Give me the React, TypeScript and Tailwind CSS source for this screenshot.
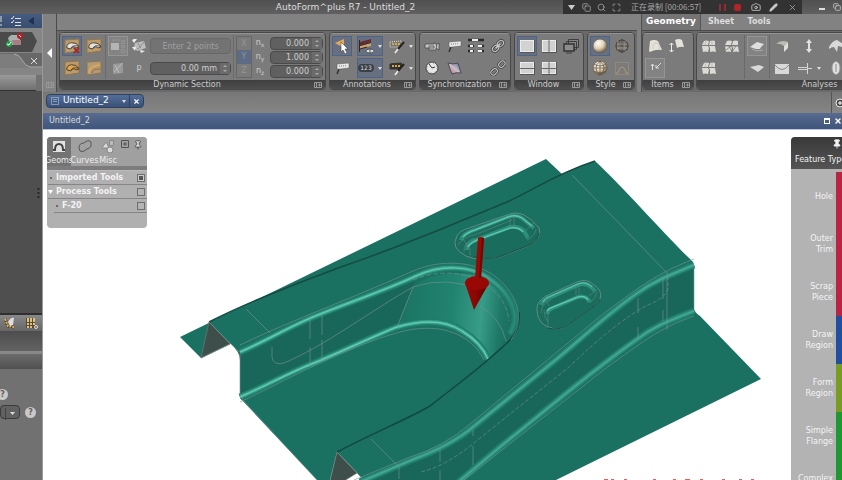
import { ReactNode } from 'react';
import { clsx } from 'clsx';
import { Camera, Copy, Maximize, Pencil, Pin, Search, X } from 'lucide-react';

interface ChildrenProps {
  children?: ReactNode;
}

interface IconButtonProps extends ChildrenProps {
  label: string;
  active?: boolean;
  outlined?: boolean;
  wide?: boolean;
}

function IconButton({ children, label, active, outlined, wide }: IconButtonProps) {
  return (
    <button
      type="button"
      aria-label={label}
      className={clsx(
        'flex h-5 shrink-0 items-center justify-center gap-1 border',
        wide ? 'w-[26px]' : 'w-5',
        active && 'border-[#4d6488] bg-[#667080]',
        outlined && 'border-[#959595] bg-[#838383]',
        !active && !outlined && 'border-transparent'
      )}
    >
      {children}
    </button>
  );
}

function Svg({ children, w = 16 }: ChildrenProps & { w?: number }) {
  return (
    <svg width={w} height="16" viewBox={`0 0 ${w} 16`} fill="none" className="shrink-0">
      {children}
    </svg>
  );
}

function Caret() {
  return (
    <svg width="4" height="3" viewBox="0 0 4 3" className="shrink-0">
      <path d="M0 0h4L2 3z" fill="#e0e0e0" />
    </svg>
  );
}

function ExpandIcon() {
  return (
    <svg width="8" height="6" viewBox="0 0 8 6" fill="none" stroke="#999">
      <path d="M.5.5h7v5h-7zM2.5 1v4M4 3h3M5.500 1.500v3" />
    </svg>
  );
}

interface GroupProps extends ChildrenProps {
  title: string;
  className?: string;
  expand?: boolean;
}

function Group({ title, className, children, expand = true }: GroupProps) {
  return (
    <section className={clsx('flex h-[58px] flex-col overflow-hidden rounded-sm border border-[#484848] bg-[#7b7b7b]', className)}>
      <div className="flex h-[47px] shrink-0 items-center border-t border-[#929292] px-[2px]">{children}</div>
      <div className="flex h-[10px] items-center bg-gradient-to-b from-[#3f3f3f] to-[#505050] pr-[3px] leading-[10px] text-[#ccc]">
        <h2 className="flex-1 text-center">{title}</h2>
        {expand && (
          <button type="button" aria-label={`${title} options`}>
            <ExpandIcon />
          </button>
        )}
      </div>
    </section>
  );
}

function Divider() {
  return <span className="mx-[2px] h-11 w-px shrink-0 bg-[#6a6a6a]" />;
}

/* section plane with a surface cut through it */
function PlaneIcon({ cross, gold, flat }: { cross?: boolean; gold?: boolean; flat?: boolean }) {
  return (
    <Svg>
      <path d="M1 2l14-1v12L1 15z" fill={flat ? '#b39b75' : '#bd9c69'} stroke="#8f7650" />
      {flat ? (
        <>
          <path d="M3 13c0-5 3-7 11-8" stroke="#e3a957" strokeWidth="1.500" />
          <path d="M6 13c0-3 3-4 8-4" stroke="#8d6c41" />
        </>
      ) : (
        <>
          <path d="M3 10c-1-3 2-6 6-5 3 0 5 2 6 4l-3 1c-2-2-4-1-5 1z" fill={gold ? '#dfa64f' : '#e2e2e2'} stroke="#4c4032" />
          <path d="M7 10c2-3 4-2 8-2" stroke="#4c4032" />
        </>
      )}
      {cross && <path d="M10 10l5 5M15 10l-5 5" stroke="#9e2b33" strokeWidth="2" />}
    </Svg>
  );
}

function LabelIcon() {
  return (
    <Svg>
      <path d="M3 4l12-1v5l-9 1-2 1-1-2z" fill="#e9e9e9" stroke="#555" strokeWidth=".5" />
      <path d="M5 9l-2 5" stroke="#333" strokeWidth="1.500" />
      <path d="M5 6.200l8-.6" stroke="#777" strokeDasharray="1 1" />
    </Svg>
  );
}

function WandIcon({ dark }: { dark?: boolean }) {
  return (
    <Svg>
      <path
        d="M1 4l11-1 2 3-4 3H1z"
        fill={dark ? '#333' : '#777'}
        stroke={dark ? '#333' : '#ddd'}
        strokeDasharray={dark ? undefined : '1 1'}
      />
      <path d="M3 6h8" stroke="#dba83c" strokeWidth="2" strokeDasharray="2 1" />
      <path d="M15 4l-6 7" stroke="#222" strokeWidth="2" />
      <path d="M9 11l-3 4" stroke="#eee" strokeWidth="1.500" />
    </Svg>
  );
}

function PaneIcon({ split }: { split: string }) {
  return (
    <Svg>
      <rect x="1.500" y="2.500" width="13" height="11" fill="#d2d2d2" stroke="#ececec" />
      <path d="M1 14.500h14.500V2" stroke="#555" />
      <path d={split} stroke="#686868" />
    </Svg>
  );
}

function ChainIcon({ open }: { open?: boolean }) {
  const near = open ? -1 : 1;
  const far = open ? 10 : 8;
  return (
    <Svg>
      <g transform="rotate(-45 8 8)">
        <rect x={near} y="5.500" width="7" height="5" rx="2.500" stroke="#444" strokeWidth="2.500" />
        <rect x={far} y="5.500" width="7" height="5" rx="2.500" stroke="#444" strokeWidth="2.500" />
        <rect x={near} y="5.500" width="7" height="5" rx="2.500" stroke="#c8c8c8" />
        <rect x={far} y="5.500" width="7" height="5" rx="2.500" stroke="#c8c8c8" />
        {!open && <path d="M5 8h6" stroke="#ccc" strokeWidth="1.500" />}
      </g>
    </Svg>
  );
}

function SphereIcon({ mesh, wire }: { mesh?: boolean; wire?: boolean }) {
  return (
    <Svg>
      <defs>
        <radialGradient id="ball" cx=".38" cy=".3" r=".7">
          <stop offset="0" stopColor="#fff" />
          <stop offset=".55" stopColor="#e0cfb3" />
          <stop offset="1" stopColor="#6d604e" />
        </radialGradient>
      </defs>
      <circle cx="8" cy="8" r={wire ? 6 : 7} fill={wire ? '#777' : 'url(#ball)'} stroke={wire ? '#39352f' : '#6d604e'} strokeWidth=".8" />
      {(mesh || wire) && (
        <path
          d="M8 1v14M1 8h14M2 4.500q6 3 12 0M2 11.500q6 3 12 0M8 1q-8 7 0 14M8 1q8 7 0 14"
          stroke={wire ? '#4d483f' : '#5b503f'}
          strokeWidth=".7"
        />
      )}
      {wire && <path d="M4 3v9M11 3v10M3 6h10M3 10h10" stroke="#b5a993" strokeWidth=".6" />}
    </Svg>
  );
}

function MeshIcon({ refined }: { refined?: boolean }) {
  return (
    <Svg>
      <path d="M3 3q2-1 5 0l-1 4-6 0zM9 3q3-1 5 0l0 4H8zM1 8h6l1 2-1 4q-3-1-5 0zM8 8h6l1 6q-3-1-6 0l0-4z" fill="#dcdad4" />
      {refined ? (
        <path d="M1 8h14M5 8l3 6M12 8l-4 6M2 12l5-4" stroke="#777" strokeWidth=".8" />
      ) : (
        <path d="M5 3l-1 4M11 3v4" stroke="#bbb" />
      )}
    </Svg>
  );
}

function SurfaceIcon() {
  return (
    <Svg>
      <path d="M3 3q4-2 8 0l4 9q-6-1-12 2l-1-1z" fill="#e5e2da" />
      <path d="M6 11q-1-6 3-6t3 6" stroke="#cbc7bd" />
    </Svg>
  );
}

interface NumberFieldProps {
  label: ReactNode;
  id: string;
  value: string;
  className?: string;
}

function NumberField({ label, id, value, className }: NumberFieldProps) {
  return (
    <div className="flex items-center gap-1 text-[#cfcfcf]">
      <label htmlFor={id} className="w-3 text-center">{label}</label>
      <span className={clsx('flex h-[13px] items-center rounded-sm border border-[#4a4a4a] bg-[#606060]', className)}>
        <input id={id} defaultValue={value} className="h-full w-0 min-w-0 flex-1 bg-transparent pr-[3px] text-right outline-none" />
        <svg width="10" height="11" viewBox="0 0 10 11" className="bg-[#6b6b6b]">
          <path d="M5 2l2 2H3zM5 9l2-2H3z" fill="#aaa" />
        </svg>
      </span>
    </div>
  );
}

function DynamicSection() {
  return (
    <Group title="Dynamic Section" className="w-[267px]">
      <div className="grid grid-cols-2 gap-x-[3px] gap-y-[2px]">
        <IconButton label="Hide section" active><PlaneIcon cross /></IconButton>
        <IconButton label="Section plane"><PlaneIcon /></IconButton>
        <IconButton label="Cut section"><PlaneIcon gold /></IconButton>
        <IconButton label="Section curves"><PlaneIcon flat /></IconButton>
      </div>
      <Divider />
      <div className="flex flex-col gap-[2px]">
        <div className="flex items-center gap-px">
          <IconButton label="Section list" outlined>
            <Svg>
              <path d="M1 5h8v7H1z" fill="#b4b4b4" />
              <path d="M11.500 2.500h3v3h-3zM11.500 7.500h3v2h-3zM11.500 11.500h3v3h-3zM3 4V2h7" stroke="#949494" />
            </Svg>
          </IconButton>
          <IconButton label="Move section">
            <Svg>
              <path d="M4 5l9-2 2 7-9 3-3-4z" fill="#bdbdbd" />
              <path d="M3 1h3L3 5 1 2zM1 9l4 0-1 4zM10 15l4-2-5-1z" fill="#ededed" />
              <path d="M7 5l2 4 4-5M6 11l4-2" stroke="#8c8c8c" />
            </Svg>
          </IconButton>
          <input
            aria-label="Enter 2 points"
            placeholder="Enter 2 points"
            className="h-4 w-[81px] rounded-sm border border-[#676767] bg-[#737373] text-center placeholder:text-[#a0a0a0]"
          />
        </div>
        <div className="flex items-center gap-px">
          <IconButton label="Pick points">
            <Svg>
              <path d="M3 4l10-1v10L3 14z" fill="#9a9a9a" />
              <path d="M4 12l4-4 4-5M5 5l4 8" stroke="#bbb" />
            </Svg>
          </IconButton>
          <div className="ml-1">
            <NumberField id="p" label="p" value="0.00 mm" className="ml-px w-[81px]" />
          </div>
        </div>
      </div>
      <Divider />
      <div className="flex w-4 shrink-0 flex-col border border-[#666] text-center text-[#969696]">
        <button type="button" className="h-[13px] leading-[13px]">X</button>
        <button type="button" className="h-[14px] bg-[#5d6c85] leading-[14px]">Y</button>
        <button type="button" className="h-[13px] leading-[13px]">Z</button>
      </div>
      <div className="flex flex-col gap-px pl-[2px]">
        <NumberField id="nx" label={<>n<sub className="text-[6px]">x</sub></>} value="0.000" className="w-[53px]" />
        <NumberField id="ny" label={<>n<sub className="text-[6px]">y</sub></>} value="1.000" className="w-[53px]" />
        <NumberField id="nz" label={<>n<sub className="text-[6px]">z</sub></>} value="0.000" className="w-[53px]" />
      </div>
    </Group>
  );
}

function Annotations() {
  return (
    <Group title="Annotations" className="w-[87px]">
      <div className="grid grid-cols-[20px_26px_26px] gap-x-[5px] gap-y-[2px]">
        <IconButton label="Pick" active>
          <Svg>
            <path d="M1 5l9-4v9z" fill="#eaa85a" />
            <path d="M7 4l7 7-3 0 2 4-2 1-2-4-2 2z" fill="#fff" stroke="#333" strokeWidth=".5" />
          </Svg>
        </IconButton>
        <IconButton label="Measure" active wide>
          <Svg>
            <path d="M2 4v3l11-3V1z" fill="#6b2930" />
            <path d="M2 8v3l11-3V5z" fill="#d3a06a" />
            <path d="M1.500 2v12M2 7.500l11-3M2 11l7-2" stroke="#322622" />
            <ellipse cx="12" cy="13" rx="4" ry="2" fill="#ddd" stroke="#333" strokeWidth=".7" />
            <path d="M12 11v4" stroke="#555" />
          </Svg>
          <Caret />
        </IconButton>
        <IconButton label="Edit marks" wide><WandIcon /><Caret /></IconButton>
        <IconButton label="Label"><LabelIcon /></IconButton>
        <IconButton label="Values" active wide>
          <span className="flex h-[8px] w-4 items-center justify-center rounded-sm bg-[#3b3f48] text-[6px] leading-none text-[#ddd]">123</span>
          <Caret />
        </IconButton>
        <IconButton label="Edit labels" wide><WandIcon dark /><Caret /></IconButton>
      </div>
    </Group>
  );
}

function Synchronization() {
  return (
    <Group title="Synchronization" className="w-[92px]">
      <div className="grid grid-cols-4 gap-x-[2px] gap-y-[2px]">
        <IconButton label="Camera">
          <Svg>
            <path d="M1 6h9V5h2v2l3-2v7l-3-2v2H5v-2H1z" fill="#c4c4c4" stroke="#4c4c4c" strokeWidth=".8" />
            <path d="M5 8h5v2H5zM12.500 6v5" stroke="#666" />
          </Svg>
        </IconButton>
        <IconButton label="Sync labels"><LabelIcon /></IconButton>
        <IconButton label="Sync sliders">
          <Svg>
            <path d="M0 2h16M0 8h6M10 8h6M0 13h6M10 13h6" stroke="#2c2c2c" strokeWidth="2.500" />
            <path d="M4 2h6M2 8h3M10 8h4M2 13h3M10 13h4" stroke="#eee" strokeWidth="2" />
          </Svg>
        </IconButton>
        <IconButton label="Link"><ChainIcon /></IconButton>
        <IconButton label="Time">
          <Svg>
            <circle cx="8" cy="8" r="6" fill="#e6e6e6" stroke="#444" />
            <path d="M8 8L5 4M8 8l3-1" stroke="#333" />
            <circle cx="8" cy="8" r="5" stroke="#888" strokeDasharray="1 3" />
          </Svg>
        </IconButton>
        <IconButton label="Result">
          <Svg>
            <defs>
              <linearGradient id="result" x1="0" x2="1" y1="1" y2="0">
                <stop offset="0" stopColor="#b06a72" />
                <stop offset=".5" stopColor="#cdbcc4" />
                <stop offset="1" stopColor="#4b6b9f" />
              </linearGradient>
            </defs>
            <path d="M2 3q5 2 10 0l3 10q-5-1-9 1-2-4-4-11z" fill="url(#result)" stroke="#4c4a58" />
          </Svg>
        </IconButton>
        <span />
        <IconButton label="Unlink"><ChainIcon open /></IconButton>
      </div>
    </Group>
  );
}

function WindowGroup() {
  return (
    <Group title="Window" className="w-[70px]">
      <div className="grid grid-cols-3 gap-x-[2px] gap-y-[2px]">
        <IconButton label="Single" active><PaneIcon split="" /></IconButton>
        <IconButton label="Two columns"><PaneIcon split="M8 2v12" /></IconButton>
        <IconButton label="Cascade">
          <Svg>
            <path d="M5.500 1.500h10v8h-10zM3.500 3.500h10v8h-10z" fill="#848484" stroke="#3c3c3c" />
            <path d="M1 6h10v7H1z" fill="#8c8c8c" stroke="#333" strokeWidth="1.500" />
            <path d="M3 15h6" stroke="#3c3c3c" />
          </Svg>
        </IconButton>
        <IconButton label="Two rows"><PaneIcon split="M1 8.500h14" /></IconButton>
        <IconButton label="Four panes"><PaneIcon split="M8 2v12M1 8.500h14" /></IconButton>
      </div>
    </Group>
  );
}

function StyleGroup() {
  return (
    <Group title="Style" className="w-12">
      <div className="grid grid-cols-2 gap-x-[2px] gap-y-[2px]">
        <IconButton label="Shaded" active><SphereIcon /></IconButton>
        <IconButton label="Wireframe"><SphereIcon wire /></IconButton>
        <IconButton label="Shaded mesh"><SphereIcon mesh /></IconButton>
        <IconButton label="Outline">
          <Svg>
            <path d="M1.500 2.500h13v12h-13z" stroke="#a7997f" strokeDasharray="1 1" />
            <path d="M2 13h2q1-6 4-6t4 6h2" stroke="#b3976b" />
          </Svg>
        </IconButton>
      </div>
    </Group>
  );
}

function Items() {
  return (
    <Group title="Items" className="w-[52px] shrink-0">
      <div className="grid grid-cols-2 gap-x-[2px] gap-y-[2px]">
        <IconButton label="Surface"><SurfaceIcon /></IconButton>
        <IconButton label="Offset">
          <Svg>
            <path d="M6 2q4-2 7 0l2 7q-4-1-7 1z" fill="#e5e2da" />
            <path d="M2.500 5v9M.5 7l2-2 2 2M.5 12l2 2 2-2" stroke="#eee" />
          </Svg>
        </IconButton>
        <IconButton label="Directions" outlined>
          <Svg>
            <path d="M5.500 10V4M4 6l1.500-2L7 6M14 3L9 8M9 5v3h3" stroke="#ddd" />
          </Svg>
        </IconButton>
      </div>
    </Group>
  );
}

function Analyses() {
  return (
    <Group title="Analyses" className="min-w-[250px] flex-1" expand={false}>
      <div className="grid grid-cols-2 gap-x-[3px] gap-y-[2px]">
        <IconButton label="Mesh"><MeshIcon /></IconButton>
        <IconButton label="Mesh quality"><MeshIcon refined /></IconButton>
        <IconButton label="Mesh check"><MeshIcon /></IconButton>
      </div>
      <Divider />
      <div className="flex flex-col gap-[2px]">
        <IconButton label="Draft" outlined>
          <Svg>
            <path d="M1 9l7-5 7 2-3 3-1 2-4 0z" fill="#dedede" />
            <path d="M3 11l5 2 6-1" stroke="#aaa" />
          </Svg>
        </IconButton>
        <IconButton label="Undercut">
          <Svg><path d="M1 7l9-2 5 2-6 5z" fill="#d9d9d9" /></Svg>
        </IconButton>
      </div>
      <Divider />
      <div className="grid grid-cols-3 gap-x-[7px] gap-y-[2px]">
        <IconButton label="Radius">
          <Svg>
            <path d="M2 6q5-5 12-2l-4 4q-4-3-8-2z" fill="#bdbbb6" />
            <path d="M14 4v6l-4 4V8z" fill="#e0ded8" />
          </Svg>
        </IconButton>
        <IconButton label="Height">
          <Svg><path d="M8 1l3 4H9v6h2l-3 4-3-4h2V5H5z" fill="#e2e2e2" /></Svg>
        </IconButton>
        <IconButton label="Curvature">
          <Svg><path d="M1 9q3-6 8-7l6 4-1 3-4-1-1 6-3-5q-3 0-5 2z" fill="#d9d9d9" /></Svg>
        </IconButton>
        <IconButton label="Area">
          <Svg>
            <path d="M1 4h14v10H1z" fill="#d9d9d9" />
            <path d="M1 5q7 9 14 0" stroke="#888" />
          </Svg>
        </IconButton>
        <IconButton label="Distance">
          <Svg>
            <path d="M1 7.500h9M1 9.500h9M10.500 3v11M11 8.500h4" stroke="#d5d5d5" />
          </Svg>
          <Caret />
        </IconButton>
        <IconButton label="Thickness">
          <Svg>
            <ellipse cx="8" cy="8" rx="4" ry="6.500" fill="#e2e2e2" stroke="#999" />
            <path d="M8 4v8" stroke="#888" />
          </Svg>
        </IconButton>
      </div>
      <svg width="4" height="10" viewBox="0 0 4 10" className="-ml-px"><path d="M0 0v10l4-5z" fill="#fff" /></svg>
    </Group>
  );
}

function TitleBar() {
  return (
    <header className="flex h-[14px] shrink-0 items-center bg-gradient-to-b from-[#505050] to-[#606060] leading-[14px]">
      <h1 className="flex-1 pl-32 text-center text-[9px] text-[#ddd]">AutoForm^plus R7 - Untitled_2</h1>
      <div className="flex h-full w-[239px] items-center gap-[6px] bg-[#323232] pl-1 font-['Noto_Sans_CJK_SC',sans-serif] text-[#aaa]">
        <svg width="9" height="5" viewBox="0 0 9 5"><path d="M1 0h7L4.500 5z" fill="#ccc" /></svg>
        <Copy size={9} />
        <Search size={9} />
        <Maximize size={9} />
        <span className="ml-1 w-[82px] whitespace-nowrap">正在录制 [00:06:57]</span>
        <svg width="7" height="7" viewBox="0 0 7 7"><path d="M0 0h2v7H0zM5 0h2v7H5z" fill="#942b30" /></svg>
        <svg width="7" height="7" viewBox="0 0 7 7" className="ml-[2px]"><rect width="7" height="7" rx="2" fill="#b3232b" /></svg>
        <Camera size={10} className="ml-1 text-[#ccc]" />
        <Pencil size={9} className="ml-[2px] fill-current text-[#ccc]" />
        <X size={9} className="ml-1" />
      </div>
      <div className="flex w-10 items-center justify-end gap-2 pr-px text-[#ddd]">
        <span className="mt-1 h-[2px] w-[6px] bg-[#ddd]" />
        <Copy size={8} />
      </div>
    </header>
  );
}

function Help() {
  return (
    <button type="button" className="size-[11px] shrink-0 rounded-full bg-[#c9c9c9] text-center font-bold leading-[11px] text-[#606060]">?</button>
  );
}

function Sidebar() {
  return (
    <aside className="flex w-[43px] shrink-0 flex-col border-r border-[#999] bg-[#717171]">
      <div className="flex h-[14px] items-center gap-[6px] bg-gradient-to-b from-[#445b80] to-[#3a4e70] pr-1">
        <svg width="4" height="10" viewBox="0 0 4 10"><path d="M1 0v6M1 8v2" stroke="#ddd" /></svg>
        <svg width="12" height="10" viewBox="0 0 12 10" fill="none" stroke="#dde3ec">
          <path d="M1 2l1 1 2-3M5 2.500h6M1 6l1 1 2-3M5 6.500h6M5 9.500h6" />
        </svg>
        <svg width="6" height="8" viewBox="0 0 6 8"><path d="M6 0v8L0 4z" fill="#1e3154" /></svg>
      </div>
      <svg width="42" height="25" viewBox="0 0 42 25" className="bg-[#858585]">
        <path d="M0 4h32l5 9-5 11H0z" fill="#4a4a4a" />
        <path d="M8 10l3-3h8l2 10H10z" fill="#a9b2ad" />
        <path d="M12 12h9v5h-8z" fill="#a67f84" />
        <circle cx="20" cy="8" r="3" fill="#c21b28" />
        <path d="M19 7l2 2" stroke="#fff" />
        <circle cx="9" cy="16" r="3" fill="#21a04b" />
        <path d="M7 16l2 1 2-3" stroke="#fff" fill="none" />
      </svg>
      <div className="flex h-[15px] bg-[#686868]">
        <svg width="42" height="15" viewBox="0 0 42 15" fill="none">
          <path d="M0 1h14q5 0 8 6t8 7h12v1H0z" fill="#7d7d7d" />
          <path d="M14 1q5 0 8 6t8 7h12" stroke="#aaa" />
          <path d="M31 5l6 6M37 5l-6 6" stroke="#ddd" />
        </svg>
      </div>
      <div className="h-[7px] bg-[#858585]" />
      <div className="mr-[6px] h-4 border-b border-[#333] bg-gradient-to-b from-[#9a9a9a] to-[#707070]" />
      <div className="flex min-h-[60px] shrink basis-[222px] items-center justify-end bg-[#4f4f4f]">
        <svg width="4" height="12" viewBox="0 0 4 12" className="mr-px mb-4">
          <path d="M1.500 0v12" stroke="#282828" strokeWidth="2" strokeDasharray="2 2" />
        </svg>
      </div>
      <div className="flex h-[18px] items-center gap-[10px] border-t-2 border-[#2f2f2f] bg-gradient-to-b from-[#888] to-[#666] pl-1">
        <svg width="12" height="12" viewBox="0 0 12 12" fill="none">
          <path d="M1 2l3 7 6 1" stroke="#4a3b22" strokeWidth="3" />
          <path d="M1 2l3 7 6 1" stroke="#e0b566" strokeWidth="2" strokeDasharray="2 1" />
          <path d="M4 5q3-5 6-4l-1 7-3 1z" fill="#ddd" />
        </svg>
        <svg width="12" height="12" viewBox="0 0 12 12" fill="none">
          <path d="M0 1h9v10H0z" fill="#5a4b31" />
          <path d="M1 2h9M2 3v8M5 3v8M8 3v5" stroke="#ddc184" strokeWidth="2" strokeDasharray="2 1" />
          <circle cx="10" cy="10" r="1.500" stroke="#ddd" />
        </svg>
      </div>
      <div className="h-5 bg-gradient-to-b from-[#4d4d4d] to-[#626262]" />
      <div className="h-[18px] border-t-[3px] border-[#888] bg-gradient-to-b from-[#6c6c6c] to-[#505050]" />
      <div className="mt-5 -ml-[3px] flex"><Help /></div>
      <div className="mt-1 flex h-4 items-center gap-[5px]">
        <div className="relative w-5">
          <select aria-label="Option" className="h-[14px] w-full appearance-none rounded-sm border border-[#3b3b3b] bg-[#616161]" />
          <svg width="14" height="12" viewBox="0 0 14 12" className="pointer-events-none absolute top-[3px] right-px">
            <path d="M.5 0v12" stroke="#444" />
            <path d="M5 4h5L7.500 7z" fill="#ddd" />
          </svg>
        </div>
        <Help />
      </div>
    </aside>
  );
}

const ridges = [
  { id: '#ridge-a', base: 'url(#fade-a)', tip: '#64c9b1' },
  { id: '#ridge-b', base: 'url(#fade-a)', tip: '#64c9b1' },
  { id: '#ridge-c', base: '#2f9480', tip: '#47a894' },
  { id: '#ridge-d', base: '#2f9480', tip: '#47a894' },
];

function Part() {
  return (
    <svg
      role="img"
      aria-label="Sheet metal part"
      className="absolute inset-0 h-full w-full"
      viewBox="43 130 799 350"
      preserveAspectRatio="xMinYMin slice"
      fill="none"
    >
      <defs>
        <linearGradient id="wall" x1="397" x2="517" y1="310" y2="322" gradientUnits="userSpaceOnUse">
          <stop offset="0" stopColor="#1b7362" />
          <stop offset=".45" stopColor="#208370" />
          <stop offset=".7" stopColor="#379c88" />
          <stop offset=".86" stopColor="#1e7767" />
          <stop offset="1" stopColor="#1a6b5c" />
        </linearGradient>
        <linearGradient id="fade-a" x1="240" x2="516" y1="0" y2="0" gradientUnits="userSpaceOnUse">
          <stop offset="0" stopColor="#35a08a" />
          <stop offset=".85" stopColor="#35a08a" />
          <stop offset="1" stopColor="#24806f" />
        </linearGradient>
        <linearGradient id="fade-tip" x1="240" x2="512" y1="0" y2="0" gradientUnits="userSpaceOnUse">
          <stop offset="0" stopColor="#64c9b1" />
          <stop offset=".82" stopColor="#5ec3ab" />
          <stop offset="1" stopColor="#2a8a78" />
        </linearGradient>
        <linearGradient id="cone">
          <stop offset="0" stopColor="#9b0905" />
          <stop offset=".5" stopColor="#870602" />
          <stop offset="1" stopColor="#540201" />
        </linearGradient>
        <path id="ridge-a" d="M240 352 C268 340 292 325 318 315 C350 302 386 290 416 276 C442 264 470 266 487 277 C502 287 513 300 515 316 Q515 325 510 334" />
        <path id="ridge-b" d="M240 397 C268 385 290 372 319 361 C345 350 372 337 397 327 C425 319 447 321 462 331 C475 339 483 347 488 359" />
        <path id="ridge-c" d="M694 265 C675 273 655 280 636 294 C605 316 580 340 553 362 L473 427 C455 442 433 452 414 459 L360 482" />
        <path id="ridge-d" d="M694 311 C671 320 654 326 636 340 C605 362 580 382 553 404 L500 447 L456 484" />
      </defs>
      <path d="M180 337L546 159l17 16-100 80-233 89-29 14z" fill="#1b7161" />
      <path
        d="M209 322C260 296 315 277 338 268C420 240 474 215 507 202C532 191 555 174 595 161C625 189 665 235 693 262q1 2 1 6v40q0 4 6 8l61 63-205 101H363l-6-7-20-21-7 28h-13l-77-82v-38q0-8-10-17z"
        fill="#1b7161"
      />
      <path d="M209 322l-8 36 29-14z" fill="#3d4e4b" stroke="#777" strokeWidth=".7" />
      <path d="M337 452l-7 29h14l13-8z" fill="#3d4e4b" stroke="#777" strokeWidth=".7" />
      <path d="M240 352C290 327 365 300 417 275L397 327C350 342 290 377 240 397z" fill="#19675a" />
      <path d="M694 265C655 280 640 290 606 316L473 427C450 445 420 457 360 482h96L606 362C645 331 665 320 694 311z" fill="#19675a" />
      <path d="M413 287C430 270 480 267 500 288C519 304 517 330 488 360C481 336 451 312 397 327z" fill="url(#wall)" />
      <path d="M209 322C260 296 315 277 338 268C420 240 474 215 507 202C532 191 555 174 595 161" stroke="#154c42" strokeWidth="1.500" />
      {ridges.map((ridge) => (
        <g key={ridge.id}>
          <use href={ridge.id} stroke="#1f7b6a" strokeWidth="7" />
          <use href={ridge.id} stroke={ridge.base} strokeWidth="4" />
          <use href={ridge.id} stroke={ridge.id === '#ridge-a' ? 'url(#fade-tip)' : ridge.tip} strokeWidth="1.500" />
        </g>
      ))}
      <path d="M519 312q2 16-10 29C481 368 455 386 430 406C410 418 373 433 337 452" stroke="#12483f" strokeWidth="1.500" />
      <g stroke="#77958f" strokeWidth=".6">
        <path d="M209 322l30 30M240 353v44l77 83M201 358l29-14M337 452l26 27" />
        <path d="M246 309l24 24M572 175q46 47 95 98v57M371 439l28 28v12M694 265v43" />
        <path d="M240 345C292 320 360 295 413 271C443 258 477 262 496 277C519 296 525 320 511 340" />
        <path d="M240 402C291 378 345 347 400 332C437 322 470 332 484 360" />
        <path d="M272 347v10q1 9 12 6C323 347 372 310 413 287l-16 40M413 287q35-12 70 4M480 306q20 11 26 35" />
        <path d="M310 318v21m0 8v18M322 315v20m0 5v20" />
        <path d="M413 280q29-12 58-3 35 14 38 44" strokeDasharray="5 2" />
        <path d="M694 259C653 275 637 289 603 314L470 424Q443 447 410 457L354 480" />
        <path d="M694 316C657 329 643 342 606 368L464 480" />
        <path d="M668 276v12q-2 10-20 17-30 15-79 62L480 438q-34 29-60 34" strokeDasharray="4 2" />
        <path d="M638 298v15m0 14v12M663 279v20m0 11v11M473 430v6m0 10v19M440 449v13m0 8v10" />
      </g>
      <g>
        <path d="M457 236q2-5 12-8l38-13q9-4 17 0 8 4 15 13 4 9-11 18l-31 12q-9 1-15 0-9 2-16-2-16-8-9-20z" fill="#1a6c5d" stroke="#7d9993" strokeWidth=".7" />
        <path d="M461 240q1-6 13-10l34-13q8-3 14 1l12 10" stroke="#2c8f7b" strokeWidth="4" />
        <path d="M463 237q3-4 12-7l33-13q8-3 14 1l10 8" stroke="#5dc4ad" strokeWidth="1.500" />
        <path d="M467 250q0-7 9-10l34-13q9-1 14 4l4 7" stroke="#2c8f7b" strokeWidth="4" />
        <path d="M468 247q2-4 9-7l33-12q9-1 13 4" stroke="#5dc4ad" strokeWidth="1.500" />
        <path d="M458 245q5-8 19-11l35-14M464 252q-1-9 10-14M514 216v11M510 217v11M463 239l6 9M470 248v7M526 230l8-7M536 229q-1 7-9 11" stroke="#648880" strokeWidth=".6" />
        <path d="M539 233q-1 8-12 13l-31 12q-14 1-22-1" stroke="#174e44" />
      </g>
      <g>
        <path d="M537 310q-1-8 9-14l31-14q10-4 17 3 9 6 6 14-2 4-7 8l-25 18q-6 4-13 4-18-3-18-19z" fill="#1a6c5d" stroke="#7d9993" strokeWidth=".7" />
        <path d="M541 305q2-6 10-8l27-12q9-4 17 6" stroke="#2c8f7b" strokeWidth="4" />
        <path d="M543 302q2-4 8-6l27-12q8-3 14 3" stroke="#54b9a3" strokeWidth="1.500" />
        <path d="M547 314q1-4 6-6l25-11q8-2 12 5" stroke="#2c8f7b" strokeWidth="4" />
        <path d="M547 311q2-3 6-4l25-10q7-2 10 3" stroke="#5dc4ad" strokeWidth="1.500" />
        <path d="M541 313q0-9 10-13M545 298l4 8M548 312v15M544 310q0 8 4 12M579 285v10M576 286v9M589 296l8-6M597 292q-1 6-7 11" stroke="#648880" strokeWidth=".6" />
        <path d="M600 299q-1 4-7 8l-25 18q-11 6-20 3" stroke="#174e44" />
      </g>
      <path d="M465 283l9 27 15-27z" fill="url(#cone)" />
      <ellipse cx="477" cy="283" rx="12" ry="7" fill="#980905" />
      <path d="M478 238q3-2 6 0l-3 40q-3 1-6 0z" fill="#930b06" />
      <path d="M482 238h2l-3 40h-2z" fill="#760502" />
      <path d="M604 479.500h4m3 0h3m10 0h3m26 0h3m17 0h3m9 0h5m10 0h3m19 0h3m14 0h3m9 0h3" stroke="#e5605c" />
    </svg>
  );
}

interface TreeRowProps {
  label: string;
  open?: boolean;
  checked?: boolean;
  nested?: boolean;
}

function TreeRow({ label, open, checked, nested }: TreeRowProps) {
  return (
    <label className={clsx('flex h-[14px] items-center border-b border-[#858585] pr-[2px]', nested ? 'ml-[7px]' : 'ml-px')}>
      <svg width="6" height="6" viewBox="0 0 6 6" className="mr-[2px]">
        {open ? <path d="M0 1h5L2.500 5z" fill="#fff" /> : <circle cx="3" cy="3" r="1" fill="#555" />}
      </svg>
      <span className="flex-1 font-bold text-[#f2f2f2]">{label}</span>
      <input
        type="checkbox"
        defaultChecked={checked}
        className="size-2 appearance-none border border-[#6d6d6d] bg-[#b4b4b4] checked:bg-[#555] checked:outline-1 checked:-outline-offset-2 checked:outline-[#ccc]"
      />
    </label>
  );
}

function ToolPalette() {
  return (
    <div className="absolute top-[7px] left-1 h-[91px] w-[100px] overflow-hidden rounded-sm bg-[#b0b0b0]">
      <div className="flex h-[29px] bg-[#a0a0a0] leading-[10px] text-[#eee]">
        <button type="button" className="flex w-6 flex-col items-center gap-[3px] overflow-hidden bg-[#737373] pt-[2px]">
          <svg width="14" height="14" viewBox="0 0 14 14" fill="none">
            <rect x="1" y="2" width="12" height="11" fill="#e2e2e2" />
            <path d="M3 11q0-6 4-6t4 6M1 11h3M10 11h3" stroke="#444" strokeWidth="2" />
          </svg>
          <span className="whitespace-nowrap">Geoms</span>
        </button>
        <button type="button" className="flex w-[27px] flex-col items-center gap-[3px] pt-[2px]">
          <svg width="14" height="14" viewBox="0 0 14 14" fill="none">
            <path d="M1 9q0-5 5-5 4-4 7-1 1 6-4 7-4 4-7 2z" stroke="#555" />
          </svg>
          Curves
        </button>
        <button type="button" className="flex w-5 flex-col items-center gap-[3px] pt-[2px]">
          <svg width="14" height="14" viewBox="0 0 14 14" fill="none" stroke="#888">
            <path d="M5 3L1 9h7z" fill="#ddd" />
            <path d="M8.500 1.500h4v5h-4z" fill="#bbb" />
            <circle cx="9" cy="11" r="3" fill="#ddd" />
          </svg>
          Misc
        </button>
        <div className="flex flex-1 justify-end gap-1 pt-[3px] pr-1">
          <svg width="8" height="8" viewBox="0 0 8 8" fill="none" stroke="#555"><path d="M.5.500h7v7h-7zM3 3h2v2H3z" /></svg>
          <Pin size={10} className="fill-[#ddd] text-[#444]" />
        </div>
      </div>
      <div className="h-[5px] border-b border-[#bbb] bg-[#7c7c7c]" />
      <TreeRow label="Imported Tools" checked />
      <TreeRow label="Process Tools" open />
      <TreeRow label="F-20" nested />
    </div>
  );
}

const features = [
  { name: 'Hole', color: 'bg-[#b92443]' },
  { name: 'Outer Trim', color: 'bg-[#b92443]' },
  { name: 'Scrap Piece', color: 'bg-[#b92443]' },
  { name: 'Draw Region', color: 'bg-[#1f4fa0]' },
  { name: 'Form Region', color: 'bg-[#769d21]' },
  { name: 'Simple Flange', color: 'bg-[#1d9a2f]' },
  { name: 'Complex Flange', color: 'bg-[#1d9a2f]' },
];

function FeaturePanel() {
  return (
    <div className="absolute top-[7px] right-0 bottom-0 w-[51px] overflow-hidden rounded-tl-sm bg-[#b3b3b3] text-[#f3f3f3]">
      <div className="flex h-8 flex-col bg-gradient-to-b from-[#393939] to-[#555] pt-[2px] pl-1">
        <Pin size={10} className="self-end fill-current" />
        <h2 className="mt-[5px] leading-3 whitespace-nowrap">Feature Type</h2>
      </div>
      <ul className="pt-[3px]">
        {features.map((feature) => (
          <li key={feature.name} className="flex h-12 items-center">
            <span className="flex-1 pr-[3px] text-right leading-[11px]">{feature.name}</span>
            <span className={clsx('h-full w-[6px]', feature.color)} />
          </li>
        ))}
      </ul>
    </div>
  );
}

export default function App() {
  return (
    <div className="flex h-screen flex-col overflow-hidden bg-[#777] font-['DejaVu_Sans',sans-serif] text-[8px] text-[#ddd]">
      <TitleBar />
      <div className="flex min-h-0 flex-1">
        <Sidebar />
        <main className="flex min-w-0 flex-1 flex-col">
          <div className="flex h-[78px] shrink-0 overflow-hidden bg-[#828282]">
            <div className="flex w-[14px] shrink-0 flex-col items-center justify-end border-r border-[#4b4b4b] pb-1">
              <svg width="5" height="10" viewBox="0 0 5 10" className="mb-6"><path d="M5 0v10L0 5z" fill="#fff" /></svg>
              <ExpandIcon />
            </div>
            <div className="flex shrink-0 flex-col">
              <div className="h-4" />
              <div className="flex h-[62px] gap-[3px] border-t border-[#4b4b4b] bg-[#6a6a6a] px-[2px] pt-px">
                <DynamicSection />
                <Annotations />
                <Synchronization />
                <WindowGroup />
                <StyleGroup />
              </div>
            </div>
            <div className="ml-1 flex min-w-0 flex-1 flex-col border-l border-[#505050]">
              <nav className="flex h-4 font-bold">
                <button type="button" className="w-[59px] border-r border-[#555] bg-[#747474] text-[9px] text-white">Geometry</button>
                <button type="button" className="w-10">Sheet</button>
                <button type="button" className="w-9">Tools</button>
              </nav>
              <div className="flex h-[62px] gap-[2px] border-t border-[#4b4b4b] bg-[#6a6a6a] pt-px">
                <Items />
                <Analyses />
              </div>
            </div>
          </div>
          <div className="flex h-[21px] shrink-0 items-start bg-gradient-to-b from-[#777] to-[#858585]">
            <div className="mt-[2px] ml-[3px] flex h-[14px] w-[98px] items-center rounded-sm border border-[#2f415f] bg-gradient-to-b from-[#536e99] to-[#3a5278] text-white">
              <svg width="8" height="8" viewBox="0 0 8 8" fill="none" stroke="#ccd5e4" className="mx-1">
                <path d="M.5.500h7v7h-7z" strokeDasharray="1 1" />
                <path d="M3 2v4M5 2v4" strokeDasharray="1 1" />
              </svg>
              <span className="flex-1 text-[9px]">Untitled_2</span>
              <span className="flex h-full w-3 items-center justify-center border-r border-[#2f415f]"><Caret /></span>
              <button type="button" aria-label="Close tab" className="px-[3px]"><X size={7} strokeWidth={4} /></button>
            </div>
            <div className="ml-auto flex h-full w-[11px] items-center justify-end overflow-hidden border-l border-[#555]">
              <svg width="7" height="10" viewBox="0 0 7 10" fill="none">
                <circle cx="5" cy="5" r="4" fill="#444" stroke="#eee" />
                <path d="M5 3v4M3 5h4" stroke="#fff" />
              </svg>
            </div>
          </div>
          <div className="flex h-[17px] shrink-0 items-center border-b border-[#b8c5da] bg-gradient-to-b from-[#586b91] to-[#40557a] pl-[6px]">
            <span className="flex-1">Untitled_2</span>
            <span className="mr-1 h-[6px] w-[6px] border border-t-2 border-white" />
            <X size={8} strokeWidth={4} className="text-white" />
          </div>
          <div className="relative min-h-0 flex-1 overflow-hidden bg-white">
            <Part />
            <ToolPalette />
            <FeaturePanel />
          </div>
        </main>
      </div>
    </div>
  );
}
